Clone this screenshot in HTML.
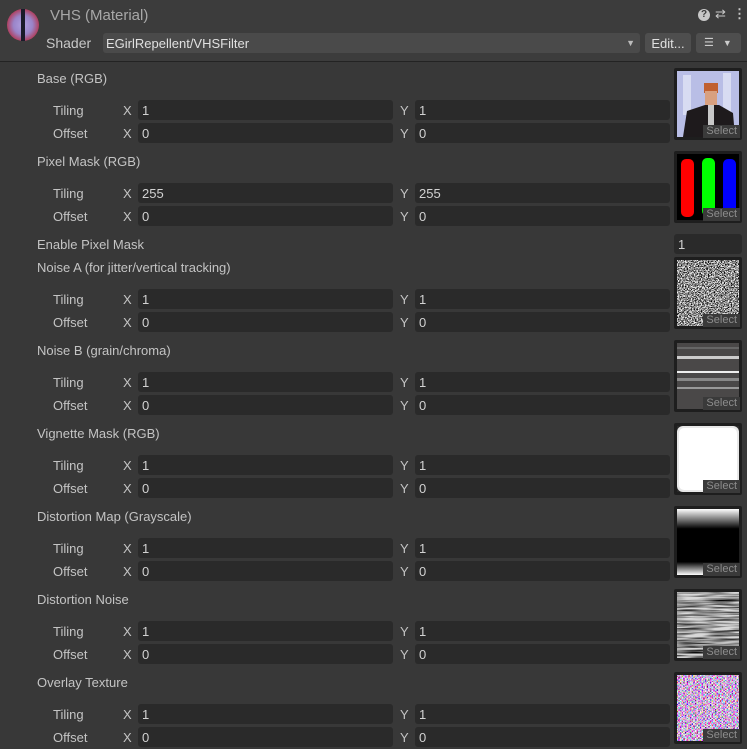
<!DOCTYPE html>
<html><head><meta charset="utf-8"><style>
*{margin:0;padding:0;box-sizing:border-box}
body{width:747px;height:747px;background:#383838;font-family:"Liberation Sans",sans-serif;font-size:13px;color:#c4c4c4;position:relative;overflow:hidden}
.a{position:absolute}
.hdr{left:0;top:0;width:747px;height:62px;background:#3c3c3c;border-bottom:1px solid #232323}
.lbl{left:37px;line-height:22px}
.sub{left:53px;line-height:22px}
.x{left:123px;line-height:22px}
.y{left:400px;line-height:22px}
.f{height:20px;background:#2a2a2a;border-radius:3px;padding-left:4px;line-height:22px;color:#d2d2d2}
.fx{left:138px;width:255px}
.fy{left:415px;width:255px}
.th{left:674px;width:68px;height:72px;background:#1e1e1e;border-radius:2px;overflow:hidden}
.th svg{position:absolute;left:3px;top:3px;width:62px;height:66px}
.sel{position:absolute;right:2px;bottom:2px;background:#3a3a3a;color:#8d8d8d;font-size:11px;padding:0 3px;line-height:13px}
</style></head><body>
<div class="a hdr"></div>
<svg class="a" style="left:6px;top:8px" width="34" height="34"><defs><radialGradient id="o"><stop offset="0" stop-color="#b0a0e0"/><stop offset=".6" stop-color="#9a84c8"/><stop offset="1" stop-color="#b04060"/></radialGradient></defs><circle cx="17" cy="17" r="16" fill="url(#o)"/><rect x="15" y="1" width="4" height="32" fill="#1a1a2a"/></svg>
<div class="a" style="left:50px;top:7px;font-size:15px;color:#a8a8a8">VHS (Material)</div>
<div class="a" style="left:46px;top:35px;font-size:14px;color:#c8c8c8">Shader</div>
<div class="a" style="left:103px;top:33px;width:537px;height:20px;background:#4a4a4a;border-radius:3px;padding-left:3px;line-height:21px;color:#e0e0e0;font-size:13px">EGirlRepellent/VHSFilter<span style="position:absolute;right:5px;top:0;font-size:9px;color:#bbb">▼</span></div>
<div class="a" style="left:645px;top:33px;width:46px;height:20px;background:#4e4e4e;border-radius:3px;text-align:center;line-height:21px;color:#e0e0e0">Edit...</div>
<div class="a" style="left:696px;top:33px;width:45px;height:20px;background:#4e4e4e;border-radius:3px;line-height:20px;color:#ccc;font-size:11px;padding-left:8px">☰ <span style="font-size:9px;margin-left:6px">▼</span></div>
<div class="a" style="left:698px;top:9px;width:12px;height:12px;border-radius:6px;background:#c8c8c8;color:#3c3c3c;font-size:10px;font-weight:bold;text-align:center;line-height:12px">?</div>
<div class="a" style="left:715px;top:6px;color:#c8c8c8;font-size:13px">⇄</div>
<div class="a" style="left:733px;top:6px;color:#c8c8c8;font-size:13px;font-weight:bold">⋮</div>

<div class="a lbl" style="top:68px">Base (RGB)</div>
<div class="a sub" style="top:100px">Tiling</div><div class="a x" style="top:100px">X</div><div class="a f fx" style="top:100px">1</div><div class="a y" style="top:100px">Y</div><div class="a f fy" style="top:100px">1</div>
<div class="a sub" style="top:123px">Offset</div><div class="a x" style="top:123px">X</div><div class="a f fx" style="top:123px">0</div><div class="a y" style="top:123px">Y</div><div class="a f fy" style="top:123px">0</div>
<div class="a th" style="top:68px"><svg viewBox="0 0 62 66" preserveAspectRatio="none"><rect width="62" height="66" fill="#b9bee6"/><rect x="6" y="4" width="8" height="40" fill="#d8dcf2"/><rect x="46" y="2" width="8" height="40" fill="#d8dcf2"/><rect x="27" y="12" width="14" height="10" fill="#c06030"/><rect x="28" y="20" width="12" height="14" fill="#d8a080"/><path d="M6 66 L10 40 L28 34 L42 34 L56 42 L58 66Z" fill="#1e1a1c"/><rect x="31" y="34" width="6" height="30" fill="#c8c8c8"/></svg><div class="sel">Select</div></div>

<div class="a lbl" style="top:151px">Pixel Mask (RGB)</div>
<div class="a sub" style="top:183px">Tiling</div><div class="a x" style="top:183px">X</div><div class="a f fx" style="top:183px">255</div><div class="a y" style="top:183px">Y</div><div class="a f fy" style="top:183px">255</div>
<div class="a sub" style="top:206px">Offset</div><div class="a x" style="top:206px">X</div><div class="a f fx" style="top:206px">0</div><div class="a y" style="top:206px">Y</div><div class="a f fy" style="top:206px">0</div>
<div class="a th" style="top:151px"><svg viewBox="0 0 62 66" preserveAspectRatio="none"><rect width="62" height="66" fill="#000"/><rect x="4" y="5" width="13" height="58" rx="5" fill="#f00"/><rect x="25" y="4" width="13" height="58" rx="5" fill="#0f0"/><rect x="46" y="5" width="13" height="58" rx="5" fill="#00f"/></svg><div class="sel">Select</div></div>

<div class="a lbl" style="top:234px">Enable Pixel Mask</div>
<div class="a f" style="left:674px;top:234px;width:68px">1</div>

<div class="a lbl" style="top:257px">Noise A (for jitter/vertical tracking)</div>
<div class="a sub" style="top:289px">Tiling</div><div class="a x" style="top:289px">X</div><div class="a f fx" style="top:289px">1</div><div class="a y" style="top:289px">Y</div><div class="a f fy" style="top:289px">1</div>
<div class="a sub" style="top:312px">Offset</div><div class="a x" style="top:312px">X</div><div class="a f fx" style="top:312px">0</div><div class="a y" style="top:312px">Y</div><div class="a f fy" style="top:312px">0</div>
<div class="a th" style="top:257px"><svg viewBox="0 0 62 66" preserveAspectRatio="none"><filter id="n1" x="0" y="0" width="1" height="1"><feTurbulence type="fractalNoise" baseFrequency="0.7 1.2" numOctaves="2" seed="3"/><feColorMatrix type="matrix" values="0 0 0 0 0 0 0 0 0 0 0 0 0 0 0 -4 0 0 0 2.4"/></filter><rect width="62" height="66" fill="#f4f4f4"/><rect width="62" height="66" fill="#000" filter="url(#n1)"/></svg><div class="sel">Select</div></div>

<div class="a lbl" style="top:340px">Noise B (grain/chroma)</div>
<div class="a sub" style="top:372px">Tiling</div><div class="a x" style="top:372px">X</div><div class="a f fx" style="top:372px">1</div><div class="a y" style="top:372px">Y</div><div class="a f fy" style="top:372px">1</div>
<div class="a sub" style="top:395px">Offset</div><div class="a x" style="top:395px">X</div><div class="a f fx" style="top:395px">0</div><div class="a y" style="top:395px">Y</div><div class="a f fy" style="top:395px">0</div>
<div class="a th" style="top:340px"><svg viewBox="0 0 62 66" preserveAspectRatio="none"><rect width="62" height="66" fill="#4a4848"/><rect y="13" width="62" height="3" fill="#ccc"/><rect y="28" width="62" height="2" fill="#eee"/><rect y="35" width="62" height="3" fill="#888"/><rect y="44" width="62" height="2" fill="#999"/><rect y="4" width="62" height="2" fill="#666"/></svg><div class="sel">Select</div></div>

<div class="a lbl" style="top:423px">Vignette Mask (RGB)</div>
<div class="a sub" style="top:455px">Tiling</div><div class="a x" style="top:455px">X</div><div class="a f fx" style="top:455px">1</div><div class="a y" style="top:455px">Y</div><div class="a f fy" style="top:455px">1</div>
<div class="a sub" style="top:478px">Offset</div><div class="a x" style="top:478px">X</div><div class="a f fx" style="top:478px">0</div><div class="a y" style="top:478px">Y</div><div class="a f fy" style="top:478px">0</div>
<div class="a th" style="top:423px"><svg viewBox="0 0 62 66" preserveAspectRatio="none"><rect width="62" height="66" fill="#2a2a2a"/><rect x="0" y="0" width="62" height="66" rx="6" fill="#e8e8e8"/><rect x="2" y="2" width="58" height="62" rx="5" fill="#fff"/></svg><div class="sel">Select</div></div>

<div class="a lbl" style="top:506px">Distortion Map (Grayscale)</div>
<div class="a sub" style="top:538px">Tiling</div><div class="a x" style="top:538px">X</div><div class="a f fx" style="top:538px">1</div><div class="a y" style="top:538px">Y</div><div class="a f fy" style="top:538px">1</div>
<div class="a sub" style="top:561px">Offset</div><div class="a x" style="top:561px">X</div><div class="a f fx" style="top:561px">0</div><div class="a y" style="top:561px">Y</div><div class="a f fy" style="top:561px">0</div>
<div class="a th" style="top:506px"><svg viewBox="0 0 62 66" preserveAspectRatio="none"><defs><linearGradient id="g" x1="0" y1="0" x2="0" y2="1"><stop offset="0" stop-color="#fff"/><stop offset=".3" stop-color="#000"/><stop offset=".8" stop-color="#000"/><stop offset="1" stop-color="#fff"/></linearGradient></defs><rect width="62" height="66" fill="url(#g)"/></svg><div class="sel">Select</div></div>

<div class="a lbl" style="top:589px">Distortion Noise</div>
<div class="a sub" style="top:621px">Tiling</div><div class="a x" style="top:621px">X</div><div class="a f fx" style="top:621px">1</div><div class="a y" style="top:621px">Y</div><div class="a f fy" style="top:621px">1</div>
<div class="a sub" style="top:644px">Offset</div><div class="a x" style="top:644px">X</div><div class="a f fx" style="top:644px">0</div><div class="a y" style="top:644px">Y</div><div class="a f fy" style="top:644px">0</div>
<div class="a th" style="top:589px"><svg viewBox="0 0 62 66" preserveAspectRatio="none"><filter id="n2" x="0" y="0" width="1" height="1"><feTurbulence type="fractalNoise" baseFrequency="0.03 0.6" numOctaves="2"/><feColorMatrix type="matrix" values="0 0 0 0 0 0 0 0 0 0 0 0 0 0 0 -2 0 0 0 1.3"/></filter><rect width="62" height="66" fill="#d8d8d8"/><rect width="62" height="66" fill="#333" filter="url(#n2)"/></svg><div class="sel">Select</div></div>

<div class="a lbl" style="top:672px">Overlay Texture</div>
<div class="a sub" style="top:704px">Tiling</div><div class="a x" style="top:704px">X</div><div class="a f fx" style="top:704px">1</div><div class="a y" style="top:704px">Y</div><div class="a f fy" style="top:704px">1</div>
<div class="a sub" style="top:727px">Offset</div><div class="a x" style="top:727px">X</div><div class="a f fx" style="top:727px">0</div><div class="a y" style="top:727px">Y</div><div class="a f fy" style="top:727px">0</div>
<div class="a th" style="top:672px"><svg viewBox="0 0 62 66" preserveAspectRatio="none"><filter id="n3" x="0" y="0" width="1" height="1"><feTurbulence type="fractalNoise" baseFrequency="0.6 1.0" numOctaves="1" seed="7"/><feComponentTransfer><feFuncR type="linear" slope="4" intercept="-1.3"/><feFuncG type="linear" slope="4" intercept="-1.5"/><feFuncB type="linear" slope="4" intercept="-1.2"/><feFuncA type="linear" slope="0" intercept="1"/></feComponentTransfer></filter><rect width="62" height="66" fill="#000" filter="url(#n3)"/></svg><div class="sel">Select</div></div>
</body></html>
